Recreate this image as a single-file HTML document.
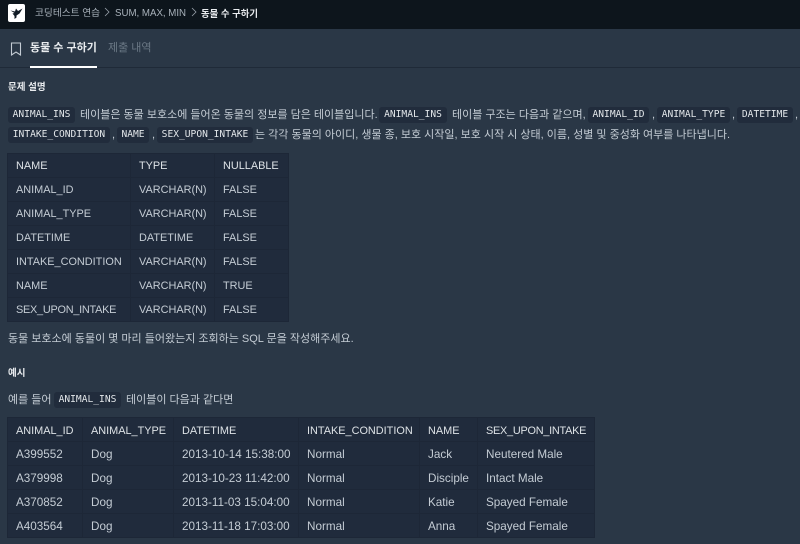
<!DOCTYPE html>
<html lang="ko"><head><meta charset="utf-8"><style>
*{box-sizing:border-box}
html,body{margin:0;padding:0;width:800px;height:544px;overflow:hidden;background:#2a3746}
body{position:relative;font-family:"Liberation Sans","Noto Sans CJK KR",sans-serif;color:#c4ccd4;font-size:11px}
.a{position:absolute;white-space:nowrap;line-height:18px}
.top{position:absolute;left:0;top:0;width:800px;height:29px;background:#0d151c}
.tabs{position:absolute;left:0;top:29px;width:800px;height:39px;border-bottom:1px solid #1f2a38}
code{position:absolute;white-space:nowrap;font-family:"DejaVu Sans Mono","Liberation Mono",monospace;font-size:9.6px;line-height:16px;height:16px;background:#212c3c;border-radius:3px;color:#e3e7ea;text-align:center}
table{position:absolute;border-collapse:collapse;table-layout:fixed;background:#202b3c;font-size:11.7px;color:#c4ccd4}
td{height:24px;padding:3px 0 0 8px;border:1px solid #1d2737;white-space:nowrap;line-height:20px;overflow:hidden}
tr:first-child td{color:#dde2e6}
.t1 td{padding:1px 0 0 8px;font-size:10.9px}
.u{font-size:10.9px}
.s{letter-spacing:-.25px}
</style></head><body>
<div class="top"></div>
<svg style="position:absolute;left:8px;top:4px" width="17" height="18" viewBox="0 0 17 18"><rect width="17" height="18" rx="2" fill="#fff"/><path d="M2.5 6.5 L7 7.5 L8 4.5 L10 7 L14.5 4.5 L11.5 9.5 L8.5 11.5 L8.5 13.5 L6.5 15 L6.5 12 L4.5 9.5 L6.5 9Z" fill="#101a24"/></svg>
<div class="a" style="left:35px;top:5px;font-size:9.7px;color:#a9b2bb">코딩테스트 연습</div>
<svg style="position:absolute;left:104px;top:7px" width="6" height="10" viewBox="0 0 6 10"><path d="M1 1L5 5L1 9" fill="none" stroke="#98a1aa" stroke-width=".8"/></svg>
<div class="a" style="left:115px;top:5px;font-size:9.7px;color:#a9b2bb">SUM, MAX, MIN</div>
<svg style="position:absolute;left:191px;top:7px" width="6" height="10" viewBox="0 0 6 10"><path d="M1 1L5 5L1 9" fill="none" stroke="#98a1aa" stroke-width=".8"/></svg>
<div class="a" style="left:201px;top:5px;font-size:9.4px;font-weight:bold;color:#e9ecef">동물 수 구하기</div>
<div class="tabs"></div>
<svg style="position:absolute;left:10px;top:42px" width="12" height="14" viewBox="0 0 12 14"><path d="M1.5 1H10.5V13L6 10L1.5 13Z" fill="none" stroke="#c4ccd4" stroke-width="1.1"/></svg>
<div class="a" style="left:30px;top:39px;font-size:11px;font-weight:bold;color:#e9ecef">동물 수 구하기</div>
<div style="position:absolute;left:30px;top:66px;width:67px;height:2px;background:#fff"></div>
<div class="a" style="left:108px;top:39px;font-size:11px;color:#6b7885">제출 내역</div>
<div class="a" style="left:8px;top:79px;font-size:9.5px;font-weight:bold;color:#e9ecef">문제 설명</div>

<code style="left:8px;top:107px;width:67px">ANIMAL_INS</code>
<div class="a" style="left:80px;top:106px">테이블은 동물 보호소에 들어온 동물의 정보를 담은 테이블입니다.</div>
<code style="left:379px;top:107px;width:68px">ANIMAL_INS</code>
<div class="a" style="left:452px;top:106px">테이블 구조는 다음과 같으며,</div>
<code style="left:588px;top:107px;width:61px">ANIMAL_ID</code>
<div class="a" style="left:652px;top:106px">,</div>
<code style="left:657px;top:107px;width:73px">ANIMAL_TYPE</code>
<div class="a" style="left:732px;top:106px">,</div>
<code style="left:737px;top:107px;width:56px">DATETIME</code>
<div class="a" style="left:795px;top:106px">,</div>
<code style="left:8px;top:127px;width:102px">INTAKE_CONDITION</code>
<div class="a" style="left:112px;top:126px">,</div>
<code style="left:117px;top:127px;width:32px">NAME</code>
<div class="a" style="left:152px;top:126px">,</div>
<code style="left:157px;top:127px;width:96px">SEX_UPON_INTAKE</code>
<div class="a" style="left:255px;top:126px">는 각각 동물의 아이디, 생물 종, 보호 시작일, 보호 시작 시 상태, 이름, 성별 및 중성화 여부를 나타냅니다.</div>

<table class="t1" style="left:7px;top:153px;width:281px">
<colgroup><col style="width:123px"><col style="width:84px"><col style="width:74px"></colgroup>
<tr><td>NAME</td><td>TYPE</td><td>NULLABLE</td></tr>
<tr><td>ANIMAL_ID</td><td>VARCHAR(N)</td><td>FALSE</td></tr>
<tr><td>ANIMAL_TYPE</td><td>VARCHAR(N)</td><td>FALSE</td></tr>
<tr><td>DATETIME</td><td>DATETIME</td><td>FALSE</td></tr>
<tr><td>INTAKE_CONDITION</td><td>VARCHAR(N)</td><td>FALSE</td></tr>
<tr><td>NAME</td><td>VARCHAR(N)</td><td>TRUE</td></tr>
<tr><td class="s">SEX_UPON_INTAKE</td><td>VARCHAR(N)</td><td>FALSE</td></tr>
</table>

<div class="a" style="left:8px;top:330px">동물 보호소에 동물이 몇 마리 들어왔는지 조회하는 SQL 문을 작성해주세요.</div>
<div class="a" style="left:8px;top:365px;font-size:9.5px;font-weight:bold;color:#e9ecef">예시</div>
<div class="a" style="left:8px;top:391px">예를 들어</div>
<code style="left:54px;top:392px;width:67px">ANIMAL_INS</code>
<div class="a" style="left:126px;top:391px">테이블이 다음과 같다면</div>

<table style="left:7px;top:417px;width:587px">
<colgroup><col style="width:75px"><col style="width:91px"><col style="width:125px"><col style="width:121px"><col style="width:58px"><col style="width:117px"></colgroup>
<tr><td class="u">ANIMAL_ID</td><td class="u">ANIMAL_TYPE</td><td class="u">DATETIME</td><td class="u">INTAKE_CONDITION</td><td class="u">NAME</td><td class="u s">SEX_UPON_INTAKE</td></tr>
<tr><td>A399552</td><td>Dog</td><td>2013-10-14 15:38:00</td><td>Normal</td><td>Jack</td><td>Neutered Male</td></tr>
<tr><td>A379998</td><td>Dog</td><td>2013-10-23 11:42:00</td><td>Normal</td><td>Disciple</td><td>Intact Male</td></tr>
<tr><td>A370852</td><td>Dog</td><td>2013-11-03 15:04:00</td><td>Normal</td><td>Katie</td><td>Spayed Female</td></tr>
<tr><td>A403564</td><td>Dog</td><td>2013-11-18 17:03:00</td><td>Normal</td><td>Anna</td><td>Spayed Female</td></tr>
</table>
</body></html>
